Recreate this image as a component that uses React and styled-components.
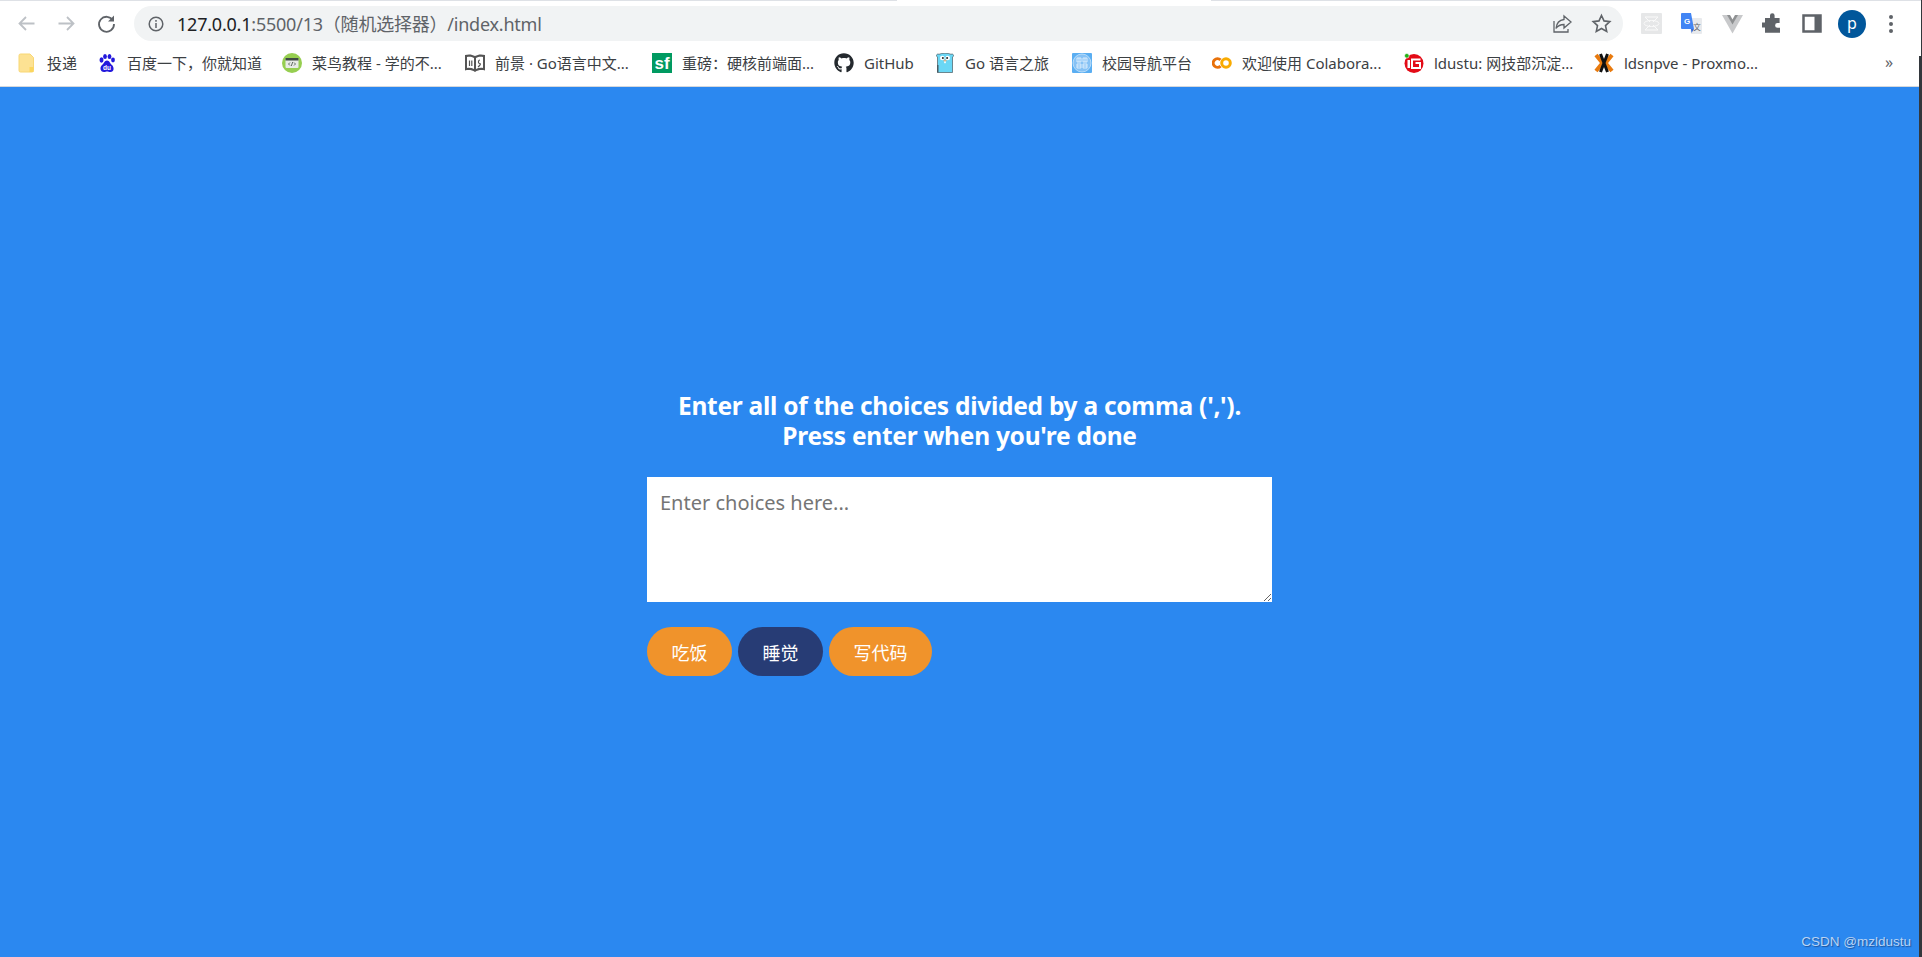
import React from "react";
import styled, { createGlobalStyle } from "styled-components";
import { FaGithub } from "react-icons/fa";

const Global = createGlobalStyle`
  html, body { margin: 0; padding: 0; height: 100%; overflow: hidden; }
  #root { height: 100%; }
  * { box-sizing: border-box; }
`;

const UI = `"Noto Sans", "Noto Sans CJK SC", sans-serif`;

const Page = styled.div`
  position: relative;
  display: flex;
  flex-direction: column;
  width: 1922px;
  height: 957px;
  background: #fff;
  font-family: ${UI};
`;

const WindowEdge = styled.div`
  position: absolute;
  right: 0;
  top: ${(p) => p.$top}px;
  bottom: ${(p) => p.$bottom}px;
  width: ${(p) => p.$w}px;
  background: #33373c;
`;

const TopEdge = styled.div`
  display: flex;
  height: 1px;
  background: #dee1e6;
  padding-left: 897px;
`;
const TabGap = styled.div`
  width: 314px;
  background: #fff;
`;

const Toolbar = styled.div`
  display: flex;
  align-items: center;
  height: 40px;
  padding-top: 5px;
  padding-left: 16px;
`;
const NavIcon = styled.svg`
  width: 21px;
  height: 21px;
  margin-right: ${(p) => p.$mr}px;
  fill: none;
  stroke: ${(p) => p.$c};
  stroke-width: ${(p) => p.$sw || 1.8};
  flex: none;
`;
const InfoIcon = styled(NavIcon)`
  width: 16px;
  height: 16px;
`;
const Omnibox = styled.div`
  display: flex;
  align-items: center;
  width: 1489px;
  height: 35px;
  border-radius: 18px;
  background: #f1f3f4;
  padding: 0 11px 0 14px;
  margin-left: 17px;
`;
const Url = styled.div`
  flex: 1;
  margin: 0 0 2px 13px;
  font-size: 18px;
  letter-spacing: -0.22px;
  white-space: nowrap;
  color: #5f6368;
`;
const Host = styled.span`
  color: #202124;
`;
const Actions = styled.div`
  display: flex;
  align-items: center;
  gap: 18px;
`;
const Extensions = styled.div`
  display: flex;
  align-items: center;
  margin-left: 18px;
`;
const ExtIcon = styled.svg`
  width: 21px;
  height: 21px;
  margin-right: ${(p) => p.$mr}px;
  flex: none;
`;
const Avatar = styled.div`
  width: 28px;
  height: 28px;
  border-radius: 50%;
  background: #01579b;
  color: #fff;
  display: flex;
  align-items: center;
  justify-content: center;
  font-size: 16px;
  margin-right: 23px;
  padding-bottom: 2px;
  flex: none;
`;
const Dots = styled.div`
  display: flex;
  flex-direction: column;
  gap: 3px;
`;
const Dot = styled.span`
  width: 4px;
  height: 4px;
  border-radius: 50%;
  background: #5f6368;
`;

const Bookmarks = styled.div`
  position: relative;
  display: flex;
  align-items: center;
  gap: 21px;
  height: 46px;
  padding: 0 0 1px 17px;
  border-bottom: 1px solid #d5d8dc;
`;
const Bookmark = styled.div`
  display: flex;
  align-items: center;
  gap: 10px;
`;
const Favicon = styled.svg`
  width: 20px;
  height: 20px;
  flex: none;
`;
const GithubIcon = styled(FaGithub)`
  width: 20px;
  height: 20px;
  flex: none;
  color: #24292e;
`;
const BookmarkLabel = styled.span`
  width: ${(p) => p.$w}px;
  font-size: 15px;
  line-height: 20px;
  white-space: nowrap;
  color: #3c4043;
`;
const More = styled.span`
  position: absolute;
  left: 1885px;
  top: 10px;
  font-size: 16px;
  color: #5f6368;
`;

const Main = styled.main`
  position: relative;
  flex: 1;
  display: flex;
  flex-direction: column;
  align-items: center;
  padding: 304px 3px 0 0;
  background: #2b88f0;
`;
const Container = styled.div`
  width: 625px;
`;
const Heading = styled.h3`
  margin: 0 -20px 26px;
  text-align: center;
  color: #fff;
  font-size: 24.5px;
  line-height: 30px;
  font-weight: 700;
  letter-spacing: -0.27px;
`;
const Choices = styled.textarea`
  display: block;
  width: 625px;
  height: 125px;
  padding: 13px;
  border: none;
  border-radius: 0;
  outline: none;
  font-family: ${UI};
  font-size: 20px;
  line-height: 26px;
  background: #fff;
  &::placeholder { color: #757575; opacity: 1; }
`;
const Tags = styled.div`
  display: flex;
  gap: 6px;
  margin-top: 25px;
`;
const Tag = styled.span`
  height: 49px;
  padding: 0 24.5px;
  display: flex;
  align-items: center;
  border-radius: 25px;
  color: #fff;
  font-size: 18px;
  background: ${(p) => (p.$active ? "#273c75" : "#f0932b")};
`;
const Watermark = styled.div`
  position: absolute;
  right: 11px;
  bottom: 8px;
  font-family: "Liberation Sans", sans-serif;
  font-size: 13.5px;
  color: #b9d4f5;
  text-shadow: 1px 1px 1px rgba(20, 50, 100, 0.6);
`;

const Icons = {
  folder: (
    <Favicon viewBox="0 0 20 20">
      <path d="M3.500 1h9.500l3.500 3.500V17.500a1.500 1.500 0 0 1-1.500 1.500h-11.500a1.500 1.500 0 0 1-1.500-1.500V2.500a1.500 1.500 0 0 1 1.500-1.500z" fill="#fde293" stroke="#f8d775" />
      <rect x="12.500" y="14" width="4" height="5" fill="#fbd65e" />
    </Favicon>
  ),
  baidu: (
    <Favicon viewBox="0 0 20 20">
      <g fill="#2319dc">
        <ellipse cx="4.500" cy="7" rx="2" ry="2.700" />
        <ellipse cx="8" cy="3.500" rx="1.900" ry="2.500" />
        <ellipse cx="12.500" cy="3.500" rx="1.900" ry="2.500" />
        <ellipse cx="16" cy="7" rx="1.900" ry="2.400" />
        <path d="M10 7.500c-2.500 0-3 3-5 4.500-2.500 2-2 7 2 7 1.500 0 2-.5 3-.5s2 .5 3.500.5c3.500 0 4-4.500 1.500-7C13 10.500 12.500 7.500 10 7.500z" />
      </g>
      <text x="10" y="16.500" textAnchor="middle" fontSize="6.500" fontWeight="700" fontFamily="Liberation Sans" fill="#fff">du</text>
    </Favicon>
  ),
  runoob: (
    <Favicon viewBox="0 0 20 20">
      <circle cx="10" cy="10" r="10" fill="#96ce50" />
      <rect x="3.500" y="5" width="13" height="10" rx="1" fill="#e8ebe6" />
      <rect x="3.500" y="5" width="13" height="2.500" fill="#3f4a43" />
      <path d="M8 9.500l-1.500 1.500 1.500 1.500M12 9.500l1.500 1.500-1.500 1.500M10.700 9l-1.400 4" fill="none" stroke="#3f4a43" strokeWidth=".8" />
    </Favicon>
  ),
  book: (
    <Favicon viewBox="0 0 20 20">
      <path d="M0 2c3.500-1 7-.8 10 1 3-1.800 6.500-2 10-1v15.500c-3.500-.8-7-.6-10 1.500-3-2.100-6.500-2.300-10-1.500z" fill="#555" />
      <path d="M2 4c2.500-.4 5-.2 7 1v11c-2-1-4.500-1.400-7-1zM11 5c2-1.200 4.500-1.400 7-1v11c-2.500-.4-5 0-7 1z" fill="#fff" />
      <path d="M4.500 7.500v5.500M6.800 7.500v5.500M15 7c-2 0-2 3.500-.3 3.500S14.500 13 13 14" fill="none" stroke="#555" strokeWidth="1.200" />
    </Favicon>
  ),
  sf: (
    <Favicon viewBox="0 0 20 20">
      <rect width="20" height="20" fill="#009a61" />
      <text x="10" y="16" textAnchor="middle" fontSize="17" fontWeight="700" fontFamily="Liberation Sans" fill="#fff">sf</text>
    </Favicon>
  ),
  gopher: (
    <Favicon viewBox="0 0 20 20">
      <path d="M1.500 2.500c0-1.200 1.300-1.800 2.500-1.200 3-1.500 9-1.500 12 0 1.200-.6 2.500 0 2.500 1.200 0 .900-.5 1.400-1 1.600V19.500H2.500V4.100c-.5-.2-1-.7-1-1.600z" fill="#6ad7f5" stroke="#4b5a60" strokeWidth=".7" />
      <rect x="2" y="12" width="1.500" height="7.500" fill="#4b5a60" />
      <circle cx="7.300" cy="5" r="2.300" fill="#fff" />
      <circle cx="12.700" cy="5" r="2.300" fill="#fff" />
      <circle cx="7.900" cy="5" r="1" fill="#222" />
      <circle cx="12.100" cy="5" r="1" fill="#222" />
      <ellipse cx="10" cy="7.700" rx="1.600" ry="1.100" fill="#d9b48a" />
      <rect x="9.200" y="8.400" width="1.600" height="1.800" fill="#fff" />
    </Favicon>
  ),
  school: (
    <Favicon viewBox="0 0 20 20">
      <rect width="20" height="20" rx="1" fill="#5aaef2" />
      <circle cx="10" cy="10" r="9" fill="#86c2f5" stroke="#d6ebfb" strokeWidth=".7" />
      <path d="M5 5h4v4H5zM11 5h4v4h-4zM5 11h4v4H5zM11 11h4v4h-4zM7 5v4M13 5v4M5 13h4M11 13h4" fill="none" stroke="#eaf5fe" strokeWidth=".8" />
    </Favicon>
  ),
  colab: (
    <Favicon viewBox="0 0 20 20">
      <circle cx="14" cy="10" r="4.300" fill="none" stroke="#f9ab00" strokeWidth="3" />
      <path d="M8.500 6.900a4.300 4.300 0 1 0 0 6.200" fill="none" stroke="#e8710a" strokeWidth="3" />
    </Favicon>
  ),
  ig: (
    <Favicon viewBox="0 0 20 20">
      <circle cx="10" cy="10.500" r="9.500" fill="#e30b17" />
      <circle cx="2.800" cy="2.800" r="2.300" fill="#21b214" stroke="#fff" strokeWidth=".6" />
      <rect x="3.500" y="7" width="2.500" height="8" fill="#fff" />
      <path d="M16.500 6.500H8v8.500h8v-5h-4.500" fill="none" stroke="#fff" strokeWidth="2" />
    </Favicon>
  ),
  proxmox: (
    <Favicon viewBox="0 0 20 20">
      <path d="M2 2l6.500 8L2 18M18 2l-6.500 8 6.500 8" fill="none" stroke="#e87a0e" strokeWidth="4" />
      <path d="M6.500 1L13.500 19M13.500 1L6.500 19" fill="none" stroke="#111" strokeWidth="3" />
    </Favicon>
  ),
};

const items = [
  ["folder", "投递", 29],
  ["baidu", "百度一下，你就知道", 134],
  ["runoob", "菜鸟教程 - 学的不...", 132],
  ["book", "前景 · Go语言中文...", 136],
  ["sf", "重磅：硬核前端面...", 131],
  ["github", "GitHub", 50],
  ["gopher", "Go 语言之旅", 86],
  ["school", "校园导航平台", 89],
  ["colab", "欢迎使用 Colabora...", 141],
  ["ig", "ldustu: 网技部沉淀...", 139],
  ["proxmox", "ldsnpve - Proxmo...", 138],
];

export default function App() {
  return (
    <Page>
      <Global />
      <TopEdge><TabGap /></TopEdge>
      <Toolbar>
        <NavIcon viewBox="0 0 21 21" $c="#bdc1c6" $mr={19}><path d="M18.500 10.500H3.500M10 4l-6.500 6.500L10 17" /></NavIcon>
        <NavIcon viewBox="0 0 21 21" $c="#bdc1c6" $mr={19}><path d="M2.500 10.500h15M11 4l6.500 6.500L11 17" /></NavIcon>
        <NavIcon viewBox="0 0 21 21" $c="#5f6368" $mr={0}>
          <path d="M17 7.500A7.500 7.500 0 1 0 18 11" />
          <path d="M18 2.500V8.500H12" fill="#5f6368" stroke="none" />
        </NavIcon>
        <Omnibox>
          <InfoIcon viewBox="0 0 16 16" $c="#5f6368" $mr={0} $sw={1.5}>
            <circle cx="8" cy="8" r="6.800" />
            <path d="M8 7v5M8 4v1.800" />
          </InfoIcon>
          <Url><Host>127.0.0.1</Host>:5500/13（随机选择器）/index.html</Url>
          <Actions>
            <NavIcon viewBox="0 0 21 21" $c="#5f6368" $mr={0} $sw={1.3}>
              <path d="M2 8v11h14v-3M12 3l7 6-7 6v-3.500c-4 0-6 1-8 4 .5-5 3-8.500 8-9z" />
            </NavIcon>
            <NavIcon viewBox="0 0 21 21" $c="#5f6368" $mr={0} $sw={1.6}>
              <path d="M10.500 2.500l2.500 5.400 5.800.7-4.300 4 1.200 5.800-5.200-2.900-5.200 2.900 1.200-5.800-4.300-4 5.800-.7z" />
            </NavIcon>
          </Actions>
        </Omnibox>
        <Extensions>
          <ExtIcon viewBox="0 0 21 21" $mr={19}>
            <rect width="21" height="21" rx="1" fill="#e6e7e8" />
            <g fill="none" stroke="#fafafa" strokeWidth="1">
              <ellipse cx="10.500" cy="10.500" rx="7.500" ry="3" />
              <path d="M4 4l5 5M17 4l-5 5M4 17l5-5M17 17l-5-5M4 4h13M4 17h13" />
            </g>
          </ExtIcon>
          <ExtIcon viewBox="0 0 21 21" $mr={20}>
            <path d="M8 5h12a1 1 0 0 1 1 1v14a1 1 0 0 1-1 1H10z" fill="#e8eaed" />
            <path d="M1 0h9l3 16H1a1 1 0 0 1-1-1V1a1 1 0 0 1 1-1z" fill="#4285f4" />
            <path d="M10 16l3 0-2.500 4z" fill="#3367d6" />
            <text x="6" y="11" textAnchor="middle" fontSize="8" fontWeight="700" fontFamily="Liberation Sans" fill="#fff">G</text>
            <text x="16" y="17" textAnchor="middle" fontSize="7.500" fontFamily="Noto Sans CJK SC" fill="#5f6368">文</text>
          </ExtIcon>
          <ExtIcon viewBox="0 0 21 21" $mr={19}>
            <path d="M0 2h21L10.500 20.500z" fill="#c8c9cb" />
            <path d="M5 2h11l-5.500 9.500z" fill="#8e9092" />
            <path d="M8 2h5l-2.500 4.500z" fill="#fff" />
          </ExtIcon>
          <ExtIcon viewBox="0 0 21 21" $mr={19}>
            <path d="M8 2.500a2.300 2.300 0 0 1 4.600 0V5h5v5h-2.100a2.400 2.400 0 0 0 0 4.800H18v5H3v-5.300H.8a2.500 2.500 0 0 1 0-5H3V5h5z" fill="#5f6368" />
          </ExtIcon>
          <ExtIcon viewBox="0 0 21 21" $mr={15}>
            <rect x="1.500" y="2.500" width="17" height="16" fill="none" stroke="#5f6368" strokeWidth="2.500" />
            <rect x="12.500" y="2.500" width="6" height="16" fill="#5f6368" />
          </ExtIcon>
          <Avatar>p</Avatar>
          <Dots><Dot /><Dot /><Dot /></Dots>
        </Extensions>
      </Toolbar>
      <Bookmarks>
        {items.map(([icon, text, w]) => (
          <Bookmark key={text}>
            {icon === "github" ? <GithubIcon /> : Icons[icon]}
            <BookmarkLabel $w={w}>{text}</BookmarkLabel>
          </Bookmark>
        ))}
        <More>»</More>
      </Bookmarks>
      <Main>
        <Container>
          <Heading>
            Enter all of the choices divided by a comma (',').<br />
            Press enter when you're done
          </Heading>
          <Choices placeholder="Enter choices here..." />
          <Tags>
            <Tag>吃饭</Tag>
            <Tag $active>睡觉</Tag>
            <Tag>写代码</Tag>
          </Tags>
        </Container>
        <Watermark>CSDN @mzldustu</Watermark>
      </Main>
      <WindowEdge $top={0} $bottom={901} $w={1} />
      <WindowEdge $top={56} $bottom={0} $w={3} />
    </Page>
  );
}
